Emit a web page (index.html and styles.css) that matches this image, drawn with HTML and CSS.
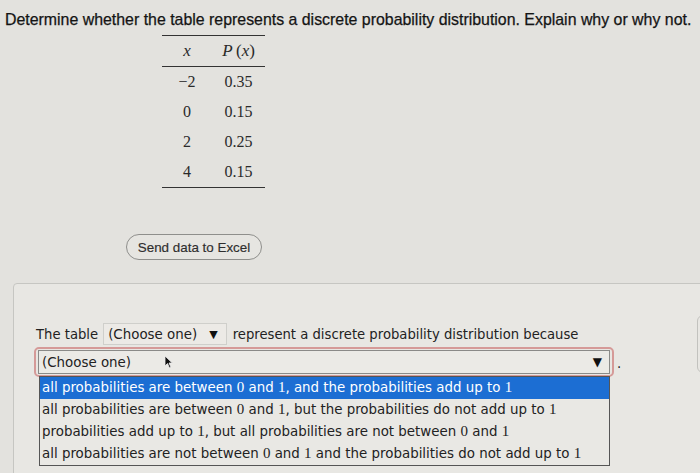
FILE: index.html
```html
<!DOCTYPE html>
<html>
<head>
<meta charset="utf-8">
<link rel="stylesheet" href="styles.css">
</head>
<body>
<div class="title">Determine whether the table represents a discrete probability distribution. Explain why or why not.</div>
<table class="dist">
  <thead>
    <tr><th><i>x</i></th><th><i>P</i>&#8201;(<i>x</i>)</th></tr>
  </thead>
  <tbody>
    <tr><td>&minus;2</td><td>0.35</td></tr>
    <tr><td>0</td><td>0.15</td></tr>
    <tr><td>2</td><td>0.25</td></tr>
    <tr><td>4</td><td>0.15</td></tr>
  </tbody>
</table>
<div class="btnrow"><span class="btn">Send data to Excel</span></div>
<div class="panel">
  <div class="content">
    <div class="line">
      <span>The table</span>
      <span class="sel1">(Choose one) <span class="tri">&#9660;</span></span>
      <span>represent a discrete probability distribution because</span>
    </div>
    <div class="line2">
      <div class="ring">
        <div class="sel2">
          <span>(Choose one)</span>
          <svg class="cursor" width="9" height="14" viewBox="0 0 9 14"><path d="M1 1 L1 11 L3.5 8.5 L5.5 13 L7 12.3 L5 8 L8.3 8 Z" fill="#111" stroke="#eee" stroke-width="0.8"/></svg>
          <span class="tri tri2">&#9660;</span>
        </div>
        <ul class="list">
          <li class="hl">all probabilities are between <span class="m">0</span> and <span class="m">1</span>, and the probabilities add up to <span class="m">1</span></li>
          <li>all probabilities are between <span class="m">0</span> and <span class="m">1</span>, but the probabilities do not add up to <span class="m">1</span></li>
          <li>probabilities add up to <span class="m">1</span>, but all probabilities are not between <span class="m">0</span> and <span class="m">1</span></li>
          <li>all probabilities are not between <span class="m">0</span> and <span class="m">1</span> and the probabilities do not add up to <span class="m">1</span></li>
        </ul>
      </div>
      <span class="dot">.</span>
    </div>
  </div>
  <div class="side"></div>
</div>
</body>
</html>
```
FILE: styles.css
```css
html, body {
  margin: 0;
  padding: 0;
  overflow: hidden;
  width: 700px;
  height: 473px;
}
body {
  background: #e3e2de;
  color: #222;
  font-family: "Liberation Sans", Arial, sans-serif;
}
.title {
  padding: 10px 0 0 5px;
  font-size: 15.9px;
  line-height: 20px;
  color: #141414;
  -webkit-text-stroke: 0.25px #141414;
  white-space: nowrap;
}
.dist {
  margin: 5px 0 0 162px;
  border-collapse: collapse;
  font-family: "Liberation Serif", "Times New Roman", serif;
  font-size: 16px;
  color: #2a2a2a;
  border-top: 1.5px solid #333;
  border-bottom: 1.5px solid #333;
}
.dist th {
  font-weight: normal;
  height: 30px;
  border-bottom: 1.5px solid #333;
  padding: 0;
  font-size: 17px;
}
.dist th:first-child, .dist td:first-child { width: 50px; text-align: center; }
.dist th:last-child, .dist td:last-child { width: 53px; text-align: center; }
.dist td {
  height: 30px;
  padding: 0;
}
.btnrow {
  margin: 46px 0 0 126px;
}
.btn {
  display: inline-flex;
  align-items: center;
  justify-content: center;
  box-sizing: border-box;
  width: 136px;
  height: 26px;
  border: 1px solid #8f8f8c;
  border-radius: 13px;
  font-size: 13.4px;
  color: #2e2e2e;
  -webkit-text-stroke: 0.15px #2e2e2e;
  background: #e6e5e1;
}
.panel {
  margin: 23px 0 0 13px;
  width: 748px;
  height: 200px;
  box-sizing: border-box;
  border: 1px solid #c6c6c2;
  border-radius: 4px;
  background: #e8e7e3;
  display: flex;
  padding: 39px 0 0 22px;
}
.content {
  font-family: "DejaVu Sans", Verdana, sans-serif;
  font-size: 13.2px;
  color: #222;
}
.line {
  display: flex;
  align-items: center;
  height: 22px;
  white-space: nowrap;
}
.sel1 {
  display: inline-flex;
  align-items: center;
  box-sizing: border-box;
  height: 22px;
  margin: 0 6px 0 5px;
  padding: 0 8px 0 4px;
  border: 1px solid #cfcfcb;
  background: #eceae6;
  font-size: 13.4px;
}
.tri {
  font-size: 11px;
  margin-left: 12px;
  color: #111;
}
.line2 {
  display: flex;
  align-items: flex-end;
  margin: 2px 0 0 -2px;
}
.ring {
  position: relative;
  width: 580px;
  height: 30px;
  box-sizing: border-box;
  border: 2px solid #d59a98;
  border-radius: 5px;
  padding: 1px 2px;
}
.sel2 {
  height: 24px;
  box-sizing: border-box;
  border: 1px solid #8a8a88;
  background: #ebeae6;
  display: flex;
  align-items: center;
  padding: 0 3px;
  font-size: 13.4px;
}
.cursor {
  margin-left: 33px;
}
.tri2 {
  margin-left: auto;
  margin-right: 4px;
  font-size: 12px;
}
.list {
  position: absolute;
  left: 3px;
  top: 27px;
  width: 571px;
  margin: 0;
  padding: 0;
  list-style: none;
  box-sizing: border-box;
  border: 1px solid #555;
  background: #e9e8e4;
  font-size: 13.4px;
  z-index: 2;
}
.list li {
  height: 22px;
  line-height: 21px;
  padding-left: 2px;
  white-space: nowrap;
  color: #222;
}
.list li.hl {
  background: #1c6ed3;
  color: #fff;
}
.m {
  font-family: "Liberation Serif", "Times New Roman", serif;
  font-size: 15px;
}
.dot {
  margin-left: 3px;
  margin-bottom: 6px;
}
.side {
  margin: -8px 0 0 auto;
  width: 60px;
  height: 58px;
  box-sizing: border-box;
  border: 1px solid #c2c2be;
  border-radius: 6px;
  margin-right: 3px;
}
```
